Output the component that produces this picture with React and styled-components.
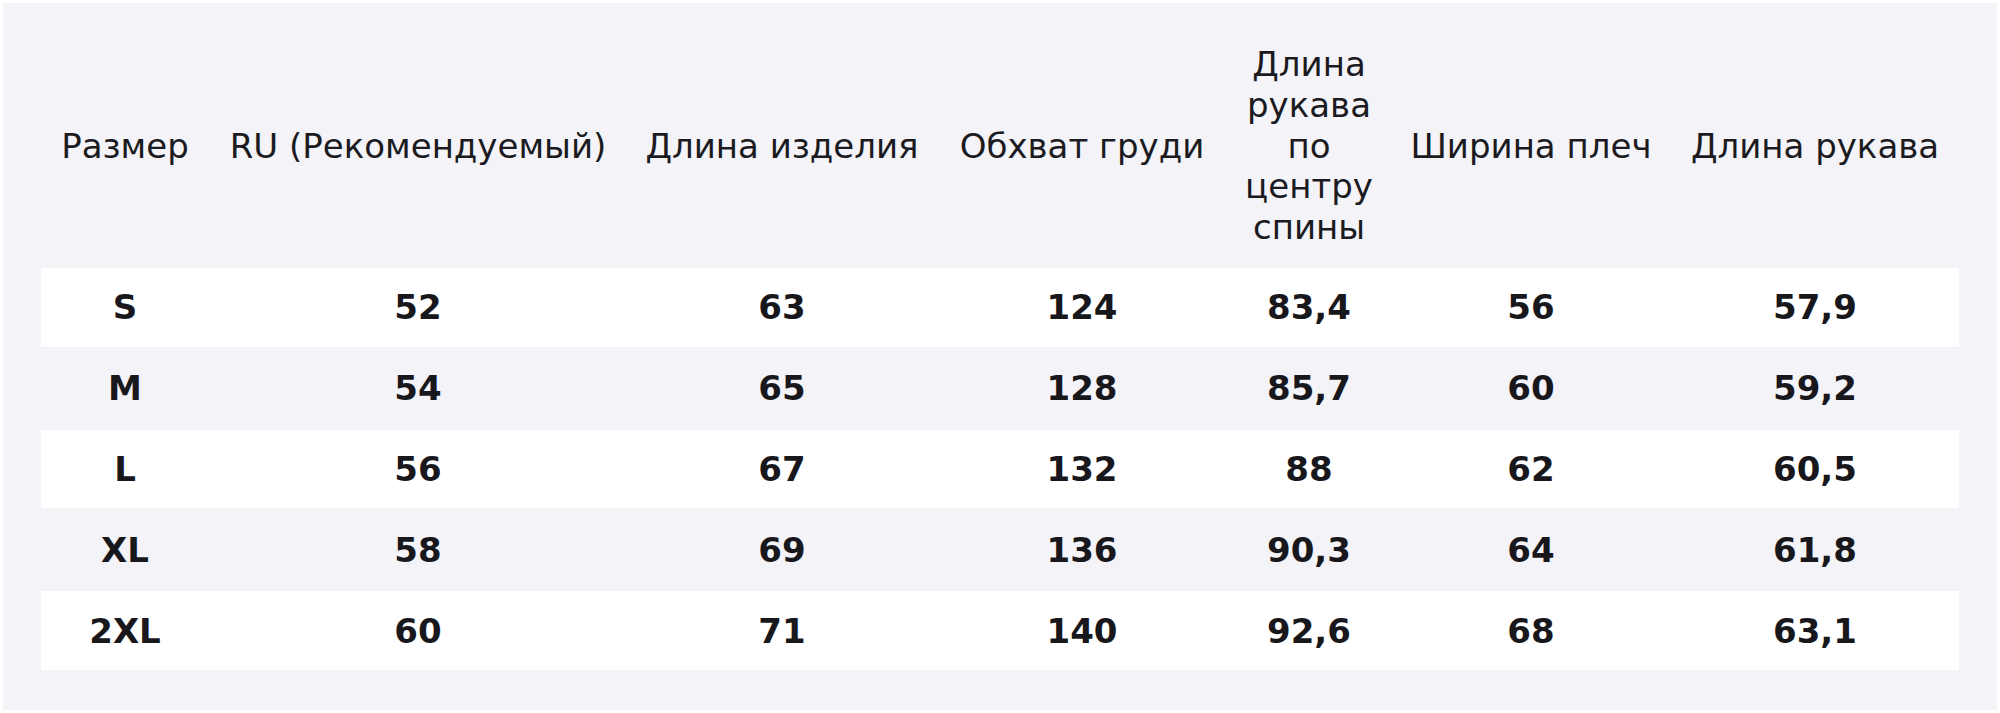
import React from 'react';
import styled, { createGlobalStyle } from 'styled-components';

const columns = [
  { title: 'Размер', width: 168 },
  { title: 'RU (Рекомендуемый)', width: 418 },
  { title: 'Длина изделия', width: 310 },
  { title: 'Обхват груди', width: 290 },
  { title: 'Длина рукава по центру спины', width: 164 },
  { title: 'Ширина плеч', width: 280 },
  { title: 'Длина рукава', width: 288 },
];

const rows = [
  ['S', '52', '63', '124', '83,4', '56', '57,9'],
  ['M', '54', '65', '128', '85,7', '60', '59,2'],
  ['L', '56', '67', '132', '88', '62', '60,5'],
  ['XL', '58', '69', '136', '90,3', '64', '61,8'],
  ['2XL', '60', '71', '140', '92,6', '68', '63,1'],
];

const GlobalStyle = createGlobalStyle`
  html, body {
    margin: 0;
    padding: 0;
    background: #ffffff;
  }
  body {
    font-family: "DejaVu Sans", Verdana, sans-serif;
  }
`;

const Page = styled.div`
  padding: 3px;
  background: #ffffff;
`;

const Panel = styled.div`
  background: #f3f3f8;
  padding: 37px 38px 38px;
`;

const Table = styled.table`
  width: 100%;
  table-layout: fixed;
  border-collapse: separate;
  border-spacing: 0 2px;
`;

const HeadCell = styled.th`
  font-weight: 400;
  font-size: 34px;
  line-height: 1.2;
  color: #1b1b1f;
  text-align: center;
  vertical-align: middle;
  padding: 2px 14px 18px;
`;

const Row = styled.tr`
  background: ${(p) => (p.$striped ? 'transparent' : '#ffffff')};
`;

const Cell = styled.td`
  height: 77.8px;
  padding: 1px 14px 0;
  font-weight: 700;
  font-size: 34px;
  line-height: 1.2;
  color: #17171c;
  text-align: center;
  vertical-align: middle;
`;

export default function App() {
  return (
    <>
      <GlobalStyle />
      <Page>
        <Panel>
          <Table>
            <colgroup>
              {columns.map((c) => (
                <col key={c.title} style={{ width: c.width }} />
              ))}
            </colgroup>
            <thead>
              <tr>
                {columns.map((c) => (
                  <HeadCell key={c.title}>{c.title}</HeadCell>
                ))}
              </tr>
            </thead>
            <tbody>
              {rows.map((r, i) => (
                <Row key={r[0]} $striped={i % 2 === 1}>
                  {r.map((v, j) => (
                    <Cell key={j}>{v}</Cell>
                  ))}
                </Row>
              ))}
            </tbody>
          </Table>
        </Panel>
      </Page>
    </>
  );
}
